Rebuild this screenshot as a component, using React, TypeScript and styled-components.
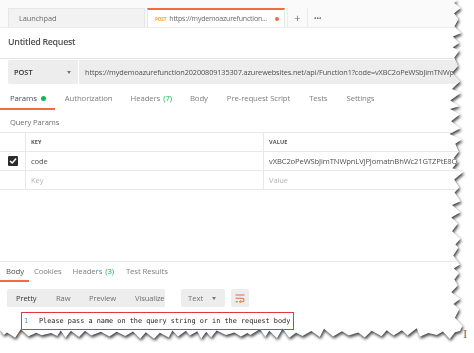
import React from "react";
import styled, { createGlobalStyle } from "styled-components";

const Global = createGlobalStyle`
  html, body { margin: 0; padding: 0; background: #ffffff; }
  body { font-family: "Open Sans", "Noto Sans", sans-serif; color: #505050; }
  * { box-sizing: border-box; }
`;

const ORANGE = "#f26b3a";
const GREEN = "#0cbb52";

function makeRng(seed: number) {
  let s = seed;
  return () => {
    s = (s * 16807) % 2147483647;
    return s / 2147483647;
  };
}

const tornClip = (() => {
  const r = makeRng(11);
  const pts: string[] = ["0px 0px", "457px 0px"];
  let i = 0;
  for (let y = 3; y < 329; y += 3 + r() * 6) {
    const spike = r() > 0.8 ? 2.5 : 0;
    const x = 456.5 + (i % 2 ? 1 : -1) * (1 + r() * 3.5 + spike);
    pts.push(`${x.toFixed(1)}px ${y.toFixed(1)}px`);
    i++;
  }
  pts.push("460px 331px");
  i = 0;
  for (let x = 455; x > 2; x -= 3 + r() * 7) {
    const spike = r() > 0.8 ? 2 : 0;
    const y = 334 + (i % 2 ? 1 : -1) * (1 + r() * 2.8 + spike);
    pts.push(`${x.toFixed(1)}px ${y.toFixed(1)}px`);
    i++;
  }
  pts.push("0px 330px");
  return `polygon(${pts.join(", ")})`;
})();

const Page = styled.div`
  position: relative;
  width: 474px;
  height: 353px;
  background: #ffffff;
  overflow: hidden;
`;

const Shadow = styled.div`
  filter: drop-shadow(1.5px 2.5px 1.6px rgba(0, 0, 0, 0.75));
`;

const Card = styled.div`
  width: 474px;
  height: 342px;
  background: #ffffff;
  display: flex;
  flex-direction: column;
  overflow: hidden;
`;

/* ---------- top tab bar ---------- */
const TabBar = styled.div`
  height: 28px;
  padding: 8px 0 0 8px;
  background: #fafafa;
  border-bottom: 1px solid #ececec;
  display: flex;
  align-items: stretch;
  flex-shrink: 0;
`;

const Tab = styled.div<{ $active?: boolean; $w: number }>`
  width: ${(p) => p.$w}px;
  height: 19px;
  margin-right: 2px;
  display: flex;
  align-items: center;
  padding: 0 5px 0 ${(p) => (p.$active ? 7 : 10)}px;
  font-size: 7.4px;
  letter-spacing: -0.1px;
  color: #6b6b6b;
  background: ${(p) => (p.$active ? "#ffffff" : "#f2f2f2")};
  border: 1px solid #e6e6e6;
  border-bottom: none;
  border-top: ${(p) => (p.$active ? `2px solid ${ORANGE}` : "1px solid #e6e6e6")};
  white-space: nowrap;
  overflow: hidden;
`;

const TabMethod = styled.span`
  font-size: 4.6px;
  font-weight: 700;
  color: #f5a623;
  margin-right: 3px;
`;

const TabTitle = styled.span`
  flex: 1;
  font-size: 7px;
  letter-spacing: -0.2px;
  overflow: hidden;
`;

const Dot = styled.span<{ $c: string; $s?: number }>`
  display: inline-block;
  width: ${(p) => p.$s ?? 5}px;
  height: ${(p) => p.$s ?? 5}px;
  border-radius: 50%;
  background: ${(p) => p.$c};
  flex-shrink: 0;
`;

const BarButton = styled.div`
  width: 20px;
  height: 19px;
  display: flex;
  align-items: center;
  justify-content: center;
  color: #6b6b6b;
  border-left: 1px solid #ececec;
  font-size: 11px;
  line-height: 1;
`;

const MoreDots = styled.span`
  font-size: 8px;
  letter-spacing: -0.5px;
  color: #777;
`;

/* ---------- title ---------- */
const TitleBar = styled.div`
  height: 31px;
  padding: 0 0 3px 8px;
  display: flex;
  align-items: center;
  border-bottom: 1px solid #e6e6e6;
  font-size: 8.9px;
  font-weight: 600;
  letter-spacing: -0.3px;
  color: #505050;
  flex-shrink: 0;
`;

/* ---------- url row ---------- */
const UrlRow = styled.div`
  display: flex;
  height: 24px;
  margin: 1px 0 0 8px;
  flex-shrink: 0;
`;

const MethodSelect = styled.div`
  width: 70px;
  background: #ededed;
  border-radius: 2px 0 0 2px;
  display: flex;
  align-items: center;
  justify-content: space-between;
  padding: 0 7px 0 6px;
  font-size: 7.4px;
  font-weight: 600;
  color: #333;
  margin-right: 1px;
`;

const Caret = styled.span`
  width: 0;
  height: 0;
  border-left: 2.5px solid transparent;
  border-right: 2.5px solid transparent;
  border-top: 3px solid #777;
`;

const UrlInput = styled.div`
  flex: 1;
  background: #ededed;
  display: flex;
  align-items: center;
  padding-left: 6px;
  font-size: 7.35px;
  letter-spacing: -0.12px;
  color: #505050;
  white-space: nowrap;
  overflow: hidden;
`;

/* ---------- request tabs ---------- */
const TabsRow = styled.div<{ $h: number; $mt: number }>`
  display: flex;
  height: ${(p) => p.$h}px;
  margin-top: ${(p) => p.$mt}px;
  flex-shrink: 0;
`;

const TabItem = styled.div<{ $active?: boolean; $pl: number; $pr: number }>`
  display: flex;
  align-items: center;
  gap: 4px;
  padding: 0 ${(p) => p.$pr}px 0 ${(p) => p.$pl}px;
  font-size: 7.8px;
  letter-spacing: -0.12px;
  color: ${(p) => (p.$active ? "#505050" : "#808080")};
  border-bottom: 2px solid ${(p) => (p.$active ? ORANGE : "transparent")};
  white-space: nowrap;
`;

const Count = styled.span`
  color: ${GREEN};
  margin-left: 3px;
`;

const SectionLabel = styled.div`
  height: 22px;
  padding: 2px 0 0 10px;
  display: flex;
  align-items: center;
  font-size: 7.6px;
  letter-spacing: -0.1px;
  color: #707070;
  flex-shrink: 0;
`;

/* ---------- params table ---------- */
const Table = styled.div`
  border-top: 1px solid #e8e8e8;
  display: flex;
  flex-direction: column;
  flex-shrink: 0;
`;

const Row = styled.div`
  display: grid;
  grid-template-columns: 25px 238px 1fr;
  height: 19px;
  border-bottom: 1px solid #e8e8e8;
`;

const Cell = styled.div<{ $kind?: "head" | "ph" | "val" }>`
  display: flex;
  align-items: center;
  padding-left: 5px;
  border-left: 1px solid #e8e8e8;
  white-space: nowrap;
  overflow: hidden;
  font-size: ${(p) => (p.$kind === "head" ? "5.6px" : "7.6px")};
  font-weight: ${(p) => (p.$kind === "head" ? 700 : 400)};
  letter-spacing: ${(p) => (p.$kind === "head" ? "0.1px" : "-0.12px")};
  color: ${(p) => (p.$kind === "head" ? "#555" : p.$kind === "ph" ? "#b5b5b5" : "#505050")};
`;

const CheckCell = styled.div`
  display: flex;
  align-items: center;
  justify-content: center;
  padding-left: 1px;
`;

const CheckBox = styled.div`
  width: 10px;
  height: 10px;
  border-radius: 1px;
  background: #2b2b2b;
  display: flex;
  align-items: center;
  justify-content: center;
`;

/* ---------- response ---------- */
const Spacer = styled.div`
  height: 71px;
  flex-shrink: 0;
`;

const ResponseArea = styled.div`
  border-top: 1px solid #e8e8e8;
  display: flex;
  flex-direction: column;
  flex-shrink: 0;
`;

const Toolbar = styled.div`
  display: flex;
  align-items: stretch;
  height: 18px;
  margin: 7px 0 0 7px;
`;

const Segment = styled.div`
  width: 158px;
  background: #ededed;
  border-radius: 2px;
  display: flex;
  align-items: center;
`;

const SegItem = styled.div<{ $w: number; $on?: boolean }>`
  width: ${(p) => p.$w}px;
  padding-left: 9px;
  font-size: 7.6px;
  letter-spacing: -0.12px;
  color: ${(p) => (p.$on ? "#333" : "#707070")};
  white-space: nowrap;
`;

const Select = styled.div`
  width: 44px;
  margin-left: 16px;
  background: #ededed;
  border-radius: 2px;
  display: flex;
  align-items: center;
  justify-content: space-between;
  padding: 0 9px 0 7px;
  font-size: 7.6px;
  color: #707070;
`;

const WrapButton = styled.div`
  width: 18px;
  margin-left: 6px;
  background: #ededed;
  border-radius: 2px;
  display: flex;
  align-items: center;
  justify-content: center;
`;

const CodeLine = styled.div`
  width: 273px;
  height: 18px;
  margin: 5px 0 0 21px;
  border: 1.6px solid #e0383c;
  display: flex;
  align-items: center;
  font-family: "DejaVu Sans Mono", "Liberation Mono", monospace;
  font-size: 6.85px;
  color: #222;
  white-space: pre;
`;

const LineNo = styled.span`
  width: 17px;
  padding-left: 2px;
  color: #6f8fb5;
`;

const Cursor = styled.div`
  position: absolute;
  left: 463px;
  top: 326px;
  font-family: "Liberation Serif", serif;
  font-size: 13px;
  color: #777;
`;

export default function App() {
  return (
    <Page>
      <Global />
      <Shadow>
        <Card style={{ clipPath: tornClip }}>
          <TabBar>
            <Tab $w={137}>Launchpad</Tab>
            <Tab $w={138} $active>
              <TabMethod>POST</TabMethod>
              <TabTitle>https://mydemoazurefunction...</TabTitle>
              <Dot $c={ORANGE} $s={4} />
            </Tab>
            <BarButton>+</BarButton>
            <BarButton>
              <MoreDots>•••</MoreDots>
            </BarButton>
          </TabBar>

          <TitleBar>Untitled Request</TitleBar>

          <UrlRow>
            <MethodSelect>
              POST
              <Caret />
            </MethodSelect>
            <UrlInput>
              https://mydemoazurefunction20200809135307.azurewebsites.net/api/Function1?code=vXBC2oPeWSbJimTNWpnLVjPJomatnBhWc21GTZPtE8
            </UrlInput>
          </UrlRow>

          <TabsRow $h={22} $mt={4}>
            <TabItem $active $pl={10} $pr={9}>
              Params <Dot $c={GREEN} />
            </TabItem>
            <TabItem $pl={10} $pr={9}>Authorization</TabItem>
            <TabItem $pl={9} $pr={9}>
              <span>
                Headers<Count>(7)</Count>
              </span>
            </TabItem>
            <TabItem $pl={9} $pr={9}>Body</TabItem>
            <TabItem $pl={10} $pr={9}>Pre-request Script</TabItem>
            <TabItem $pl={10} $pr={9}>Tests</TabItem>
            <TabItem $pl={10} $pr={9}>Settings</TabItem>
          </TabsRow>

          <SectionLabel>Query Params</SectionLabel>

          <Table>
            <Row>
              <CheckCell />
              <Cell $kind="head">KEY</Cell>
              <Cell $kind="head">VALUE</Cell>
            </Row>
            <Row>
              <CheckCell>
                <CheckBox>
                  <svg width="8" height="8" viewBox="0 0 8 8">
                    <path d="M1.4 4.2 L3.2 6 L6.7 2" stroke="#fff" strokeWidth="1.5" fill="none" strokeLinecap="round" strokeLinejoin="round" />
                  </svg>
                </CheckBox>
              </CheckCell>
              <Cell $kind="val">code</Cell>
              <Cell $kind="val">vXBC2oPeWSbJimTNWpnLVjPJomatnBhWc21GTZPtE8Q==</Cell>
            </Row>
            <Row>
              <CheckCell />
              <Cell $kind="ph">Key</Cell>
              <Cell $kind="ph">Value</Cell>
            </Row>
          </Table>

          <Spacer />

          <ResponseArea>
            <TabsRow $h={20} $mt={0}>
              <TabItem $active $pl={6} $pr={5}>Body</TabItem>
              <TabItem $pl={5} $pr={5}>Cookies</TabItem>
              <TabItem $pl={6} $pr={6}>
                <span>
                  Headers<Count>(3)</Count>
                </span>
              </TabItem>
              <TabItem $pl={6} $pr={6}>Test Results</TabItem>
            </TabsRow>

            <Toolbar>
              <Segment>
                <SegItem $w={40} $on>Pretty</SegItem>
                <SegItem $w={33}>Raw</SegItem>
                <SegItem $w={46}>Preview</SegItem>
                <SegItem $w={39}>Visualize</SegItem>
              </Segment>
              <Select>
                Text
                <Caret />
              </Select>
              <WrapButton>
                <svg width="10" height="9" viewBox="0 0 10 9">
                  <path d="M0.5 1 H9.5" stroke={ORANGE} strokeWidth="1.1" fill="none" />
                  <path d="M0.5 4.3 H7.3 A1.7 1.7 0 0 1 7.3 7.7 H4.6" stroke={ORANGE} strokeWidth="1.1" fill="none" />
                  <path d="M5.8 6.4 L4.4 7.7 L5.8 9" stroke={ORANGE} strokeWidth="1" fill="none" />
                  <path d="M0.5 7.7 H3" stroke={ORANGE} strokeWidth="1.1" fill="none" />
                </svg>
              </WrapButton>
            </Toolbar>

            <CodeLine>
              <LineNo>1</LineNo>
              Please pass a name on the query string or in the request body
            </CodeLine>
          </ResponseArea>
        </Card>
      </Shadow>
      <Cursor>I</Cursor>
    </Page>
  );
}
